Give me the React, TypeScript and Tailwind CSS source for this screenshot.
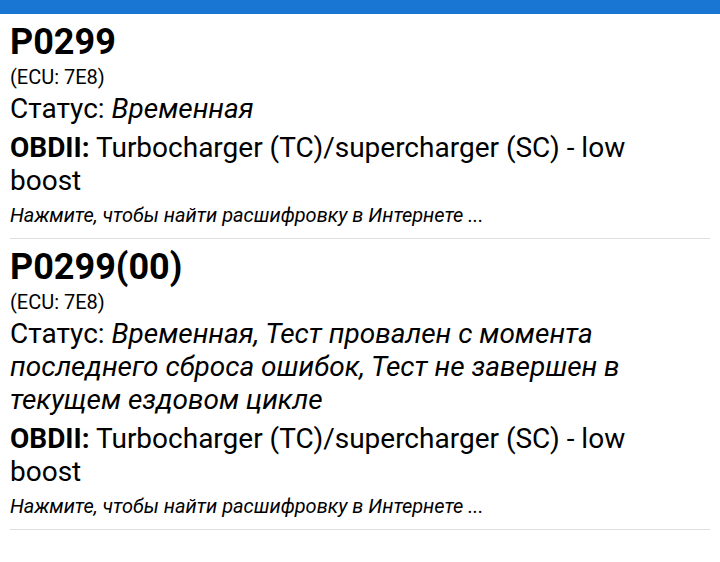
import React from "react";

function Entry({ code, status }: { code: string; status: string }) {
  return (
    <div className="pt-[7px] pb-[11px] border-b border-[#e0e0e0]">
      <div className="pr-[30px]">
        <div className="text-[36px] leading-[42px] font-bold text-black">{code}</div>
        <div className="text-[20px] leading-[24px] text-black mt-[2px]">(ECU: 7E8)</div>
        <div className="text-[28px] leading-[33px] text-black mt-[3px]">
          Статус: <span className="italic">{status}</span>
        </div>
        <div className="text-[28px] leading-[33px] text-black mt-[6px]">
          <span className="font-bold">OBDII:</span> Turbocharger (TC)/supercharger (SC) - low boost
        </div>
        <div className="text-[20px] leading-[23px] italic text-black mt-[7px]">
          Нажмите, чтобы найти расшифровку в Интернете ...
        </div>
      </div>
    </div>
  );
}

export default function App() {
  return (
    <div className="w-[720px] h-[562px] bg-white overflow-hidden" style={{ fontFamily: "Roboto, 'Noto Sans', sans-serif" }}>
      <div className="h-[14px] bg-[#1976d2]" />
      <div className="pl-[10px] pr-[10px]">
        <Entry code="P0299" status="Временная" />
        <Entry
          code="P0299(00)"
          status="Временная, Тест провален с момента последнего сброса ошибок, Тест не завершен в текущем ездовом цикле"
        />
      </div>
    </div>
  );
}
